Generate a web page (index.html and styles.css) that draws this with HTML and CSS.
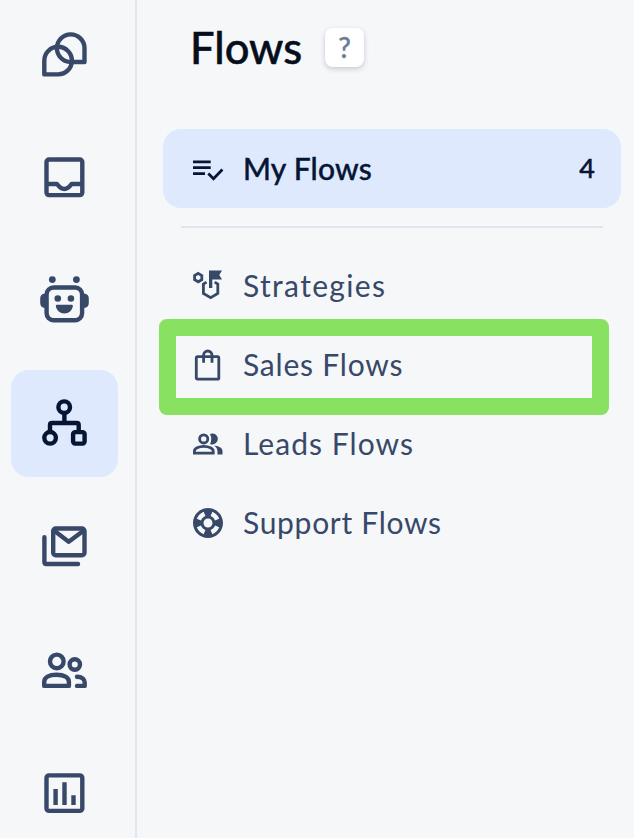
FILE: index.html
```
<!DOCTYPE html>
<html lang="en">
<head>
    <meta charset="UTF-8">
    <meta name="viewport" content="width=device-width, initial-scale=1.0">
    <title>Flows</title>
    <link rel="stylesheet" href="styles.css">
</head>
<body>
    <nav class="sidebar">
        <a class="nav-item">
            <svg class="nav-icon" viewBox="0 0 53 53">
                <path d="M46.5 34H32.8A13.8 13.8 0 1 1 46.5 20.1Z"/>
                <path d="M6.3 46.4V32.4A13.8 13.8 0 1 1 20 46.4Z"/>
            </svg>
        </a>
        <a class="nav-item">
            <svg class="nav-icon" viewBox="0 0 53 53">
                <rect x="8.5" y="8.5" width="35.8" height="35.6" rx="2.5"/>
                <path d="M8.3 33H19Q26.3 43 33.6 33H44"/>
            </svg>
        </a>
        <a class="nav-item">
            <svg class="nav-icon" viewBox="0 0 53 53">
                <rect x="8.6" y="13.5" width="35.5" height="32.8" rx="7"/>
                <path class="solid" d="M7 19.5Q2.2 20 2.2 24.5V29Q2.2 33.500 7 34ZM46 19.5Q50.800 20 50.800 24.5V29Q50.800 33.5 46 34Z"/>
                <circle class="solid" cx="14.3" cy="5.6" r="3.4"/>
                <circle class="solid" cx="38.4" cy="5.6" r="3.4"/>
                <circle class="solid" cx="19.8" cy="24.5" r="3.3"/>
                <circle class="solid" cx="32.9" cy="24.5" r="3.3"/>
                <path class="solid" d="M19 30.8H33.7Q35 30.8 34.9 32C34.2 36.5 30.8 39.5 26.4 39.5S18.5 36.5 17.8 32Q17.7 30.8 19 30.8Z"/>
            </svg>
        </a>
        <a class="nav-item active">
            <svg class="nav-icon" viewBox="0 0 53 53">
                <circle cx="26.2" cy="10.2" r="5.8"/>
                <circle cx="12.1" cy="40.8" r="5.8"/>
                <rect x="35.1" y="35.1" width="11.5" height="11.5" rx="2"/>
                <path d="M26.4 16V26M12 34V28Q12 26 14 26H38.7Q40.7 26 40.7 28V34"/>
            </svg>
        </a>
        <a class="nav-item">
            <svg class="nav-icon" viewBox="0 0 53 53">
                <rect x="15.2" y="8.5" width="31.3" height="26.8" rx="2.5"/>
                <path d="M16 10.5L30.7 21.8L45.8 10.5"/>
                <path class="round" d="M6.4 17.2V42Q6.4 44 8.4 44H40"/>
            </svg>
        </a>
        <a class="nav-item">
            <svg class="nav-icon" viewBox="0 0 53 53">
                <circle cx="18.8" cy="18.4" r="6.8"/>
                <circle cx="36.8" cy="21.5" r="5.2"/>
                <path d="M6.2 42.9V39C6.2 34.5 11 31.8 18.6 31.8S30.9 34.5 30.9 39V42.9Z"/>
                <path class="round" d="M39 33.8C44 33.8 46.7 36.2 46.7 39.5V42.9H39"/>
            </svg>
        </a>
        <a class="nav-item">
            <svg class="nav-icon" viewBox="0 0 53 53">
                <rect x="8.5" y="9.4" width="35.8" height="35.5" rx="2.5"/>
                <path d="M17.6 23V39M26.5 16.2V39M35.5 29.3V39"/>
            </svg>
        </a>
    </nav>

    <main class="panel">
        <header class="panel-header">
            <h1 class="title">Flows</h1>
            <button type="button" class="help">?</button>
        </header>

        <a class="menu-item active">
            <svg class="menu-icon" viewBox="0 0 36 36">
                <path d="M3 10.8H20.7M3 16.6H20.7M3 22.6H15"/>
                <path d="M18.3 22.5L23.5 27.7L32.4 18.6"/>
            </svg>
            <span class="label my-flows">My Flows</span>
            <span class="count">4</span>
        </a>
        <hr class="divider">
        <a class="menu-item">
            <svg class="menu-icon" viewBox="0 0 36 36">
                <path d="M8.2 5.4L11.8 7.5V11.7L8.2 13.8L4.6 11.7V7.5Z"/>
                <path class="solid" d="M19 2.5H32L29.3 7L32 11.5H22.3V20H19Z"/>
                <path d="M16.5 14.1L13.4 16V25.5L20.7 29.7L27.8 25.5V16L24.7 14.1"/>
            </svg>
            <span class="label strategies">Strategies</span>
        </a>
        <a class="menu-item highlighted">
            <svg class="menu-icon" viewBox="0 0 36 36">
                <rect x="6.3" y="9.7" width="22.5" height="22.5" rx="1.2"/>
                <path d="M13.6 15.8V8.2A4.2 4.2 0 0 1 22 8.2V15.8"/>
            </svg>
            <span class="label sales">Sales Flows</span>
        </a>
        <a class="menu-item">
            <svg class="menu-icon" viewBox="0 0 36 36">
                <circle cx="13.7" cy="12.9" r="4.1"/>
                <path d="M4.4 27.1V25C4.4 22.5 8.5 20.3 13.8 20.3S23.2 22.5 23.2 25V27.1Z"/>
                <path class="solid" d="M20 7.9A5.5 5.5 0 1 1 20 17.9Q22.5 13 20 7.9ZM24.3 19.4Q32.5 20.5 32.5 25V28.5H27.5V25Q27.5 21.8 24.3 19.4Z"/>
            </svg>
            <span class="label leads">Leads Flows</span>
        </a>
        <a class="menu-item">
            <svg class="menu-icon" viewBox="0 0 24 24">
                <path class="solid" d="M12 2C6.48 2 2 6.48 2 12s4.48 10 10 10 10-4.48 10-10S17.52 2 12 2zm7.46 7.12l-2.78 1.15c-.51-1.36-1.58-2.44-2.95-2.94l1.15-2.78c2.1.8 3.77 2.47 4.58 4.57zM12 15c-1.66 0-3-1.34-3-3s1.34-3 3-3 3 1.34 3 3-1.34 3-3 3zM9.13 4.54l1.17 2.78c-1.38.5-2.47 1.59-2.98 2.97L4.54 9.13c.81-2.11 2.48-3.78 4.59-4.59zM4.54 14.87l2.78-1.15c.51 1.38 1.59 2.46 2.97 2.96l-1.17 2.78c-2.1-.81-3.77-2.48-4.58-4.59zm10.34 4.59l-1.15-2.78c1.37-.51 2.45-1.59 2.95-2.97l2.78 1.17c-.81 2.1-2.48 3.77-4.58 4.58z"/>
            </svg>
            <span class="label support">Support Flows</span>
        </a>
    </main>
</body>
</html>
```
FILE: styles.css
```
* {
    box-sizing: border-box;
}
body {
    display: flex;
    height: 838px;
    margin: 0;
    overflow: hidden;
    font-family: Lato, "Open Sans", sans-serif;
    background: #f5f7f9;
    color: #384869;
}
.sidebar {
    display: flex;
    flex-direction: column;
    gap: 16px;
    flex: none;
    width: 137px;
    padding: 1px 0 0 11px;
    border-right: 2px solid #e1e7ef;
}
.nav-item {
    display: flex;
    align-items: center;
    justify-content: center;
    flex: none;
    width: 107px;
    height: 107px;
    border-radius: 18px;
}
.nav-item.active,
.menu-item.active {
    background: #dee9fd;
    color: #061534;
}
.nav-icon {
    width: 53px;
    height: 53px;
    fill: none;
    stroke: currentColor;
    stroke-width: 4.4;
    stroke-linejoin: round;
}
.solid {
    fill: currentColor;
    stroke: none;
}
.round {
    stroke-linecap: round;
}
.panel {
    flex: 1;
    padding: 0 13px 0 26px;
}
.panel-header {
    display: flex;
    align-items: center;
    height: 129px;
    padding: 0 0 34px 27px;
}
.title {
    width: 135px;
    margin: 0;
    padding-bottom: 2px;
    font-size: 43.5px;
    font-weight: 500;
    line-height: 52px;
    white-space: nowrap;
    color: #060e1c;
    -webkit-text-stroke: 0.5px #060e1c;
}
.help {
    width: 39px;
    height: 39px;
    padding: 0;
    border: none;
    border-radius: 8px;
    font: 500 28px/39px Lato, sans-serif;
    color: #6b7a99;
    background: #fff;
    box-shadow: 0 2px 5px rgba(56, 72, 105, 0.25);
    -webkit-text-stroke: 0.4px #6b7a99;
}
.menu-item {
    display: flex;
    align-items: center;
    position: relative;
    height: 79px;
    padding: 0 26px 0 27px;
    border-radius: 18px;
}
.menu-icon {
    flex: none;
    width: 36px;
    height: 36px;
    margin-right: 17px;
    fill: none;
    stroke: currentColor;
    stroke-width: 2.8;
}
.label {
    flex: 1;
    padding-bottom: 1px;
    font-size: 30px;
    line-height: 40px;
    letter-spacing: 0.8px;
    white-space: nowrap;
}
.my-flows {
    font-weight: 500;
    letter-spacing: 0.2px;
    -webkit-text-stroke: 0.4px #061534;
}
.strategies {
    letter-spacing: 1.35px;
}
.leads {
    letter-spacing: 1.05px;
}
.support {
    letter-spacing: 0.7px;
}
.count {
    padding-bottom: 2px;
    font-size: 27px;
    font-weight: 500;
    -webkit-text-stroke: 0.4px #061534;
}
.divider {
    height: 2px;
    margin: 18px;
    border: none;
    background: #e1e5ee;
}
/* callout frame drawn over the row */
.highlighted::after {
    content: "";
    box-sizing: border-box;
    position: absolute;
    top: -6px;
    left: -4.5px;
    width: 450.5px;
    height: 96px;
    border: 17px solid #88e160;
    border-radius: 8px;
}
```
